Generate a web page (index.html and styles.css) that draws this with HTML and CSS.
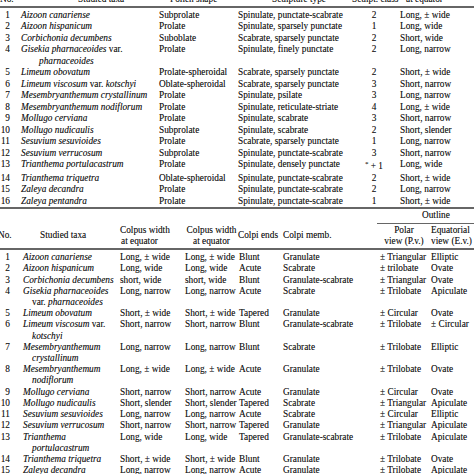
FILE: index.html
```html
<!DOCTYPE html>
<html>
<head>
<meta charset="utf-8">
<link rel="stylesheet" href="styles.css">
</head>
<body>
<div class="page">
<table class="t1">
  <colgroup>
    <col class="c-no"><col class="c-taxa"><col class="c-shape"><col class="c-sculpt"><col class="c-num"><col class="c-colpus">
  </colgroup>
  <thead>
    <tr class="hd">
      <th class="no">No.</th>
      <th class="h-taxa">Studied taxa</th>
      <th class="h-shape">Pollen shape</th>
      <th class="h-sculpt">Sculpture type</th>
      <th class="num">Sculpt. class</th>
      <th class="h-colpus">at equator</th>
    </tr>
  </thead>
  <tbody>
    <tr class="first"><td class="no">1</td><td class="taxa"><i>Aizoon canariense</i></td><td>Subprolate</td><td class="sc">Spinulate, punctate-scabrate</td><td class="num">2</td><td class="cp">Long, ± wide</td></tr>
    <tr><td class="no">2</td><td class="taxa"><i>Aizoon hispanicum</i></td><td>Prolate</td><td class="sc">Spinulate, sparsely punctate</td><td class="num">1</td><td class="cp">Long, wide</td></tr>
    <tr><td class="no">3</td><td class="taxa"><i>Corbichonia decumbens</i></td><td>Suboblate</td><td class="sc">Scabrate, sparsely punctate</td><td class="num">2</td><td class="cp">Short, wide</td></tr>
    <tr><td class="no">4</td><td class="taxa hang"><i>Gisekia pharnaceoides</i> var.<br><i>pharnaceoides</i></td><td>Prolate</td><td class="sc">Spinulate, finely punctate</td><td class="num">2</td><td class="cp">Long, narrow</td></tr>
    <tr><td class="no">5</td><td class="taxa"><i>Limeum obovatum</i></td><td>Prolate-spheroidal</td><td class="sc">Scabrate, sparsely punctate</td><td class="num">2</td><td class="cp">Short, ± wide</td></tr>
    <tr><td class="no">6</td><td class="taxa"><i>Limeum viscosum</i> var. <i>kotschyi</i></td><td>Oblate-spheroidal</td><td class="sc">Scabrate, sparsely punctate</td><td class="num">3</td><td class="cp">Short, narrow</td></tr>
    <tr><td class="no">7</td><td class="taxa"><i>Mesembryanthemum crystallinum</i></td><td>Prolate</td><td class="sc">Spinulate, psilate</td><td class="num">3</td><td class="cp">Long, narrow</td></tr>
    <tr><td class="no">8</td><td class="taxa"><i>Mesembryanthemum nodiflorum</i></td><td>Prolate</td><td class="sc">Spinulate, reticulate-striate</td><td class="num">4</td><td class="cp">Long, ± wide</td></tr>
    <tr><td class="no">9</td><td class="taxa"><i>Mollugo cerviana</i></td><td>Prolate</td><td class="sc">Spinulate, scabrate</td><td class="num">3</td><td class="cp">Short, narrow</td></tr>
    <tr><td class="no">10</td><td class="taxa"><i>Mollugo nudicaulis</i></td><td>Subprolate</td><td class="sc">Spinulate, scabrate</td><td class="num">2</td><td class="cp">Short, slender</td></tr>
    <tr><td class="no">11</td><td class="taxa"><i>Sesuvium sesuvioides</i></td><td>Prolate</td><td class="sc">Scabrate, sparsely punctate</td><td class="num">1</td><td class="cp">Long, narrow</td></tr>
    <tr><td class="no">12</td><td class="taxa"><i>Sesuvium verrucosum</i></td><td>Subprolate</td><td class="sc">Spinulate, punctate-scabrate</td><td class="num">3</td><td class="cp">Short, narrow</td></tr>
    <tr><td class="no">13</td><td class="taxa"><i>Trianthema portulacastrum</i></td><td>Prolate</td><td class="sc">Spinulate, densely punctate</td><td class="num"><span class="mark">*</span> + 1</td><td class="cp">Long, wide</td></tr>
    <tr><td class="no">14</td><td class="taxa"><i>Trianthema triquetra</i></td><td>Oblate-spheroidal</td><td class="sc">Spinulate, punctate-scabrate</td><td class="num">2</td><td class="cp">Short, ± wide</td></tr>
    <tr><td class="no">15</td><td class="taxa"><i>Zaleya decandra</i></td><td>Prolate</td><td class="sc">Spinulate, punctate-scabrate</td><td class="num">2</td><td class="cp">Long, narrow</td></tr>
    <tr class="last"><td class="no">16</td><td class="taxa"><i>Zaleya pentandra</i></td><td>Prolate</td><td class="sc">Spinulate, punctate-scabrate</td><td class="num">1</td><td class="cp">Short, ± wide</td></tr>
  </tbody>
</table>

<table class="t2">
  <colgroup>
    <col class="d-no"><col class="d-taxa"><col class="d-w1"><col class="d-w2"><col class="d-ends"><col class="d-memb"><col class="d-polar"><col class="d-eq">
  </colgroup>
  <thead>
    <tr class="ol-row">
      <th colspan="6"></th>
      <th colspan="2" class="outline">Outline</th>
    </tr>
    <tr class="hd2">
      <th class="no2">No.</th>
      <th class="h2-taxa">Studied taxa</th>
      <th class="h2-w1">Colpus width<br>at equator</th>
      <th class="h2-w2">Colpus width<br>at equator</th>
      <th class="h2-ends">Colpi ends</th>
      <th class="h2-memb">Colpi memb.</th>
      <th class="h2-polar">Polar<br>view (P.v.)</th>
      <th class="h2-eq">Equatorial<br>view (E.v.)</th>
    </tr>
  </thead>
  <tbody>
    <tr class="first2"><td class="no">1</td><td class="tx"><i>Aizoon canariense</i></td><td>Long, ± wide</td><td>Long, ± wide</td><td class="ce">Blunt</td><td class="cm">Granulate</td><td class="pv">± Triangular</td><td>Elliptic</td></tr>
    <tr><td class="no">2</td><td class="tx"><i>Aizoon hispanicum</i></td><td>Long, wide</td><td>Long, wide</td><td class="ce">Acute</td><td class="cm">Scabrate</td><td class="pv">± trilobate</td><td>Ovate</td></tr>
    <tr><td class="no">3</td><td class="tx"><i>Corbichonia decumbens</i></td><td>short, wide</td><td>short, wide</td><td class="ce">Blunt</td><td class="cm">Granulate-scabrate</td><td class="pv">± Triangular</td><td>Ovate</td></tr>
    <tr><td class="no">4</td><td class="tx hang2"><i>Gisekia pharnaceoides</i><br>var. <i>pharnaceoides</i></td><td>Long, narrow</td><td>Long, narrow</td><td class="ce">Acute</td><td class="cm">Scabrate</td><td class="pv">± Trilobate</td><td>Apiculate</td></tr>
    <tr><td class="no">5</td><td class="tx"><i>Limeum obovatum</i></td><td>Short, ± wide</td><td>Short, ± wide</td><td class="ce">Tapered</td><td class="cm">Granulate</td><td class="pv">± Circular</td><td>Ovate</td></tr>
    <tr><td class="no">6</td><td class="tx hang2"><i>Limeum viscosum</i> var.<br><i>kotschyi</i></td><td>Short, narrow</td><td>Short, narrow</td><td class="ce">Blunt</td><td class="cm">Granulate-scabrate</td><td class="pv">± Trilobate</td><td>± Circular</td></tr>
    <tr><td class="no">7</td><td class="tx hang2"><i>Mesembryanthemum</i><br><i>crystallinum</i></td><td>Long, narrow</td><td>Long, narrow</td><td class="ce">Blunt</td><td class="cm">Scabrate</td><td class="pv">± Trilobate</td><td>Elliptic</td></tr>
    <tr><td class="no">8</td><td class="tx hang2"><i>Mesembryanthemum</i><br><i>nodiflorum</i></td><td>Long, ± wide</td><td>Long, ± wide</td><td class="ce">Acute</td><td class="cm">Granulate</td><td class="pv">± Trilobate</td><td>Ovate</td></tr>
    <tr><td class="no">9</td><td class="tx"><i>Mollugo cerviana</i></td><td>Short, narrow</td><td>Short, narrow</td><td class="ce">Acute</td><td class="cm">Granulate</td><td class="pv">± Circular</td><td>Ovate</td></tr>
    <tr><td class="no">10</td><td class="tx"><i>Mollugo nudicaulis</i></td><td>Short, slender</td><td>Short, slender</td><td class="ce">Tapered</td><td class="cm">Scabrate</td><td class="pv">± Triangular</td><td>Apiculate</td></tr>
    <tr><td class="no">11</td><td class="tx"><i>Sesuvium sesuvioides</i></td><td>Long, narrow</td><td>Long, narrow</td><td class="ce">Acute</td><td class="cm">Scabrate</td><td class="pv">± Circular</td><td>Elliptic</td></tr>
    <tr><td class="no">12</td><td class="tx"><i>Sesuvium verrucosum</i></td><td>Short, narrow</td><td>Short, narrow</td><td class="ce">Tapered</td><td class="cm">Granulate</td><td class="pv">± Triangular</td><td>Apiculate</td></tr>
    <tr><td class="no">13</td><td class="tx hang2"><i>Trianthema</i><br><i>portulacastrum</i></td><td>Long, wide</td><td>Long, wide</td><td class="ce">Tapered</td><td class="cm">Granulate-scabrate</td><td class="pv">± Trilobate</td><td>Apiculate</td></tr>
    <tr><td class="no">14</td><td class="tx"><i>Trianthema triquetra</i></td><td>Short, ± wide</td><td>Short, ± wide</td><td class="ce">Blunt</td><td class="cm">Granulate</td><td class="pv">± Trilobate</td><td>Ovate</td></tr>
    <tr><td class="no">15</td><td class="tx"><i>Zaleya decandra</i></td><td>Long, narrow</td><td>Long, narrow</td><td class="ce">Acute</td><td class="cm">Granulate</td><td class="pv">± Trilobate</td><td>Apiculate</td></tr>
    <tr><td class="no">16</td><td class="tx"><i>Zaleya pentandra</i></td><td>Short, ± wide</td><td>Short, ± wide</td><td class="ce">Blunt</td><td class="cm">Granulate</td><td class="pv">± Trilobate</td><td>Ovate</td></tr>
  </tbody>
</table>
</div>
</body>
</html>
```

FILE: styles.css
```css
html, body {
  margin: 0;
  padding: 0;
  background: #ffffff;
}
body {
  width: 474px;
  height: 474px;
  overflow: hidden;
  font-family: "Liberation Serif", "Times New Roman", serif;
  font-size: 9.3px;
  color: #1c1c1c;
  text-shadow: 0 0 0.5px rgba(0, 0, 0, 0.45);
}
.page {
  display: flex;
  flex-direction: column;
}
table {
  table-layout: fixed;
  border-collapse: collapse;
  width: 474px;
}
th, td {
  padding: 0;
  font-weight: normal;
  text-align: left;
  white-space: nowrap;
  line-height: 11.5px;
  vertical-align: top;
}
i { font-style: italic; }

/* ---- top table ---- */
.t1 { margin-top: -5.75px; border-bottom: 2px solid #666666; }
.c-no { width: 10px; }
.c-taxa { width: 149px; }
.c-shape { width: 78px; }
.c-sculpt { width: 115px; }
.c-num { width: 44px; }
.c-colpus { width: 78px; }

.t1 .hd th { border-bottom: 2px solid #666666; vertical-align: bottom; }
.t1 .no, .t2 .no { text-align: right; }
.h-taxa { padding-left: 68px; }
.h-shape { padding-left: 11px; }
.h-sculpt { padding-left: 35px; }
.t1 .num { text-align: center; }
.h-colpus { padding-left: 10px; }

.t1 .first td { padding-top: 2px; }
.t1 .taxa { padding-left: 11px; }
.t1 .taxa.hang { padding-left: 29px; text-indent: -18px; }
.t1 .sc { padding-left: 1px; }
.t1 .cp { padding-left: 4px; }
.mark { font-size: 7px; vertical-align: 3px; }

/* ---- bottom table ---- */
.t2 { margin-top: 1px; }
.d-no { width: 10px; }
.d-taxa { width: 110px; }
.d-w1 { width: 65px; }
.d-w2 { width: 53px; }
.d-ends { width: 44px; }
.d-memb { width: 95px; }
.d-polar { width: 54px; }
.d-eq { width: 43px; }

.ol-row th { padding-bottom: 1px; }
.outline {
  border-bottom: 1px solid #666666;
  padding-left: 45px;
}
.hd2 th {
  line-height: 10.5px;
  padding-top: 1.5px;
  padding-bottom: 1.5px;
  vertical-align: middle;
  border-bottom: 2px solid #666666;
}
.no2 { text-indent: -2px; }
.h2-taxa { padding-left: 30px; }
.h2-w1 { text-align: center; padding-right: 26px; }
.h2-w2 { text-align: center; }
.h2-memb { padding-left: 1px; }
.h2-polar { text-align: center; }

.t2 tbody td { line-height: 11.2px; }
.t2 .first2 td { padding-top: 2.5px; }
.t2 .tx { padding-left: 13px; }
.t2 .tx.hang2 { padding-left: 22px; text-indent: -9px; }
.t2 .ce { padding-left: 1px; }
.t2 .cm { padding-left: 1px; }
.t2 .pv { padding-left: 3px; }
```
